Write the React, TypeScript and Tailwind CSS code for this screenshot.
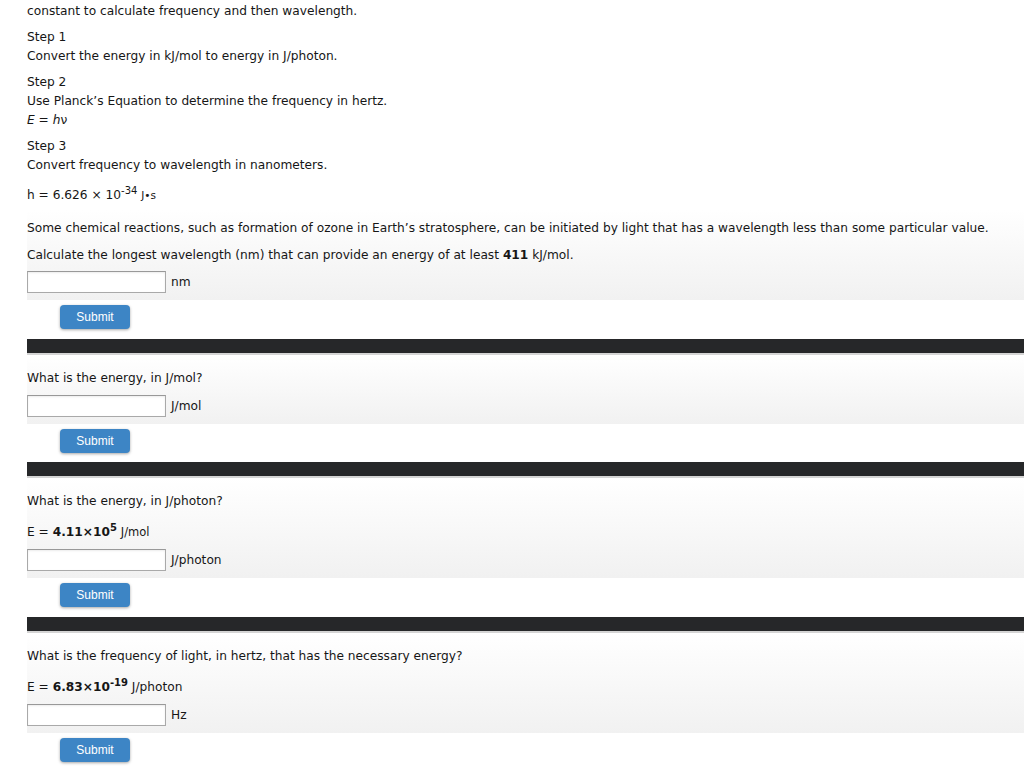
const font = { fontFamily: '"DejaVu Sans", Verdana, sans-serif' };

function Answer({ unit, mt }: { unit: string; mt: string }) {
  return (
    <div className={`flex items-center ${mt}`}>
      <input
        type="text"
        className="w-[139px] h-[22px] bg-white border border-[#a9a9a9] border-t-[#999] shadow-[inset_0_1px_2px_rgba(0,0,0,0.08)] outline-none"
      />
      <span className="ml-[5px]">{unit}</span>
    </div>
  );
}

function SubmitButton() {
  return (
    <button
      className="ml-[33px] w-[70px] h-[24px] rounded-[4px] bg-[#3d85c5] text-white text-[12px] shadow-[0_1px_3px_rgba(0,0,0,0.35)]"
      style={{ fontFamily: '"Liberation Sans", Arial, sans-serif' }}
    >
      Submit
    </button>
  );
}

function Divider() {
  return (
    <div>
      <div className="h-[14px] bg-[#262729]" />
      <div className="h-[2px] bg-[#d4d4d4]" />
    </div>
  );
}

function Question({
  children,
  unit,
  gap,
  inputGap = 'mt-[7px]',
  after = 'pb-[9px]',
}: {
  children: React.ReactNode;
  unit: string;
  gap: string;
  inputGap?: string;
  after?: string;
}) {
  return (
    <>
      <div className={`bg-gradient-to-b from-white to-[#f1f1f1] pb-[7px] ${gap}`}>
        {children}
        <Answer unit={unit} mt={inputGap} />
      </div>
      <div className={`pt-[5px] ${after}`}>
        <SubmitButton />
      </div>
    </>
  );
}

export default function App() {
  return (
    <div className="bg-white min-h-screen overflow-hidden text-[12.2px] leading-[19px] text-[#161616] pl-[27px] pt-[2px]" style={font}>
      <p>constant to calculate frequency and then wavelength.</p>
      <p className="mt-[7px]">
        Step 1
        <br />
        Convert the energy in kJ/mol to energy in J/photon.
      </p>
      <p className="mt-[7px]">
        Step 2
        <br />
        Use Planck’s Equation to determine the frequency in hertz.
        <br />
        <i>E</i> = <i>h</i>ν
      </p>
      <p className="mt-[7px]">
        Step 3
        <br />
        Convert frequency to wavelength in nanometers.
      </p>
      <p className="mt-[11px]">
        h = 6.626 × 10<sup className="text-[10px]">-34</sup>{' '}
        <span className="text-[10.5px]">J•s</span>
      </p>

      <Question unit="nm" gap="mt-[5px] pt-[9px]" inputGap="mt-[6px]" after="pb-[10px]">
        <p className="whitespace-nowrap">
          Some chemical reactions, such as formation of ozone in Earth’s stratosphere, can be initiated by light
          that has a wavelength less than some particular value.
        </p>
        <p className="mt-[8px]">
          Calculate the longest wavelength (nm) that can provide an energy of at least <b>411</b> kJ/mol.
        </p>
      </Question>

      <Divider />
      <Question unit="J/mol" gap="pt-[14px]">
        <p>What is the energy, in J/mol?</p>
      </Question>

      <Divider />
      <Question unit="J/photon" gap="pt-[14px]" after="pb-[10px]">
        <p>What is the energy, in J/photon?</p>
        <p className="mt-[12px]">
          E = <b>4.11×10<sup className="text-[10px]">5</sup></b>{' '}
          <span className="text-[11.5px]">J/mol</span>
        </p>
      </Question>

      <Divider />
      <Question unit="Hz" gap="pt-[14px]">
        <p>What is the frequency of light, in hertz, that has the necessary energy?</p>
        <p className="mt-[12px]">
          E = <b>6.83×10<sup className="text-[10px]">-19</sup></b> J/photon
        </p>
      </Question>
    </div>
  );
}
